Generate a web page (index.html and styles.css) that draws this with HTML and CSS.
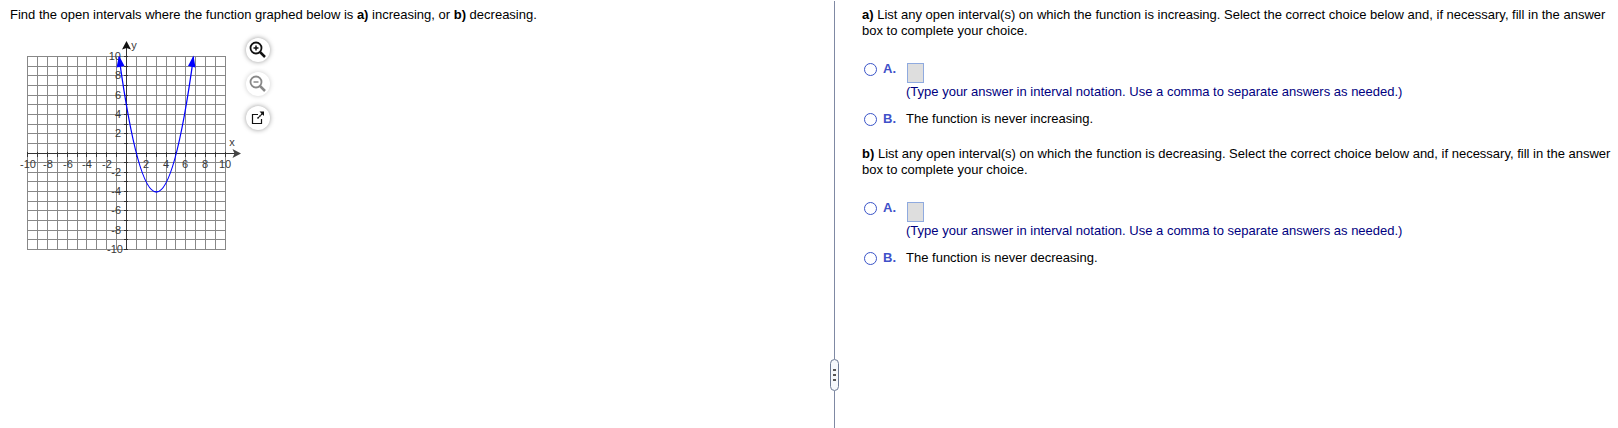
FILE: index.html
```
<!DOCTYPE html>
<html lang="en">
  <head>
    <meta charset="UTF-8" />
    <meta name="viewport" content="width=device-width, initial-scale=1.0" />
    <title>Increasing and decreasing intervals</title>
    <link rel="stylesheet" href="styles.css">
  </head>

  <body>
    <main class="exercise">
      <section class="question">
        <p class="prompt">Find the open intervals where the function graphed below is <b>a)</b> increasing, or <b>b)</b> decreasing.</p>
        <div class="figure">
          <svg class="graph" width="226" height="220" viewBox="18 38 226 220" role="img" aria-label="Graph of a parabola">
            <!-- grid -->
            <path class="grid" d="M27.5 56V250M37.5 56V250M47.5 56V250M57.5 56V250M67.5 56V250M77.5 56V250M86.5 56V250M96.5 56V250M106.5 56V250M116.5 56V250M136.5 56V250M146.5 56V250M156.5 56V250M166.5 56V250M175.5 56V250M185.5 56V250M195.5 56V250M205.5 56V250M215.5 56V250M225.5 56V250" />
            <path class="grid" d="M27 56.5H226M27 66.5H226M27 75.5H226M27 85.5H226M27 95.5H226M27 104.5H226M27 114.5H226M27 124.5H226M27 133.5H226M27 143.5H226M27 162.5H226M27 172.5H226M27 181.5H226M27 191.5H226M27 201.5H226M27 210.5H226M27 220.5H226M27 230.5H226M27 239.5H226M27 249.5H226" />
            <!-- axes and ticks -->
            <path class="axis" d="M126.5 46V250M27 153.5H235" />
            <path class="axis" d="M27.5 152V157M37.5 152V157M47.5 152V157M57.5 152V157M67.5 152V157M77.5 152V157M86.5 152V157M96.5 152V157M106.5 152V157M116.5 152V157M136.5 152V157M146.5 152V157M156.5 152V157M166.5 152V157M175.5 152V157M185.5 152V157M195.5 152V157M205.5 152V157M215.5 152V157M225.5 152V157" />
            <path class="axis" d="M124 56.5H128M124 66.5H128M124 75.5H128M124 85.5H128M124 95.5H128M124 104.5H128M124 114.5H128M124 124.5H128M124 133.5H128M124 143.5H128M124 162.5H128M124 172.5H128M124 181.5H128M124 191.5H128M124 201.5H128M124 210.5H128M124 220.5H128M124 230.5H128M124 239.5H128M124 249.5H128" />
            <path class="head-y" d="M126.500 41L131 49.500L126.500 48L122 49.500Z" />
            <path class="head-x" d="M241 153.500L232.500 158L234.500 153.500L232.500 149Z" />
            <g class="ticks end">
              <text x="121" y="60">10</text>
              <text x="121" y="79">8</text>
              <text x="121" y="99">6</text>
              <text x="121" y="118">4</text>
              <text x="121" y="137">2</text>
              <text x="121" y="176">-2</text>
              <text x="121" y="195">-4</text>
              <text x="121" y="214">-6</text>
              <text x="121" y="234">-8</text>
              <text x="123" y="253">-10</text>
            </g>
            <g class="ticks">
              <text x="28" y="168">-10</text>
              <text x="48" y="168">-8</text>
              <text x="68" y="168">-6</text>
              <text x="87" y="168">-4</text>
              <text x="107" y="168">-2</text>
              <text x="146" y="168">2</text>
              <text x="166" y="168">4</text>
              <text x="185" y="168">6</text>
              <text x="205" y="168">8</text>
              <text x="225" y="168">10</text>
              <text x="134" y="49">y</text>
              <text x="232" y="146">x</text>
            </g>
            <!-- y = (x - 1)(x - 5) -->
            <path class="curve" d="M119 57Q156.500 327 193.500 57" />
            <path class="curve-head" d="M119 55.500L124.500 66L116.500 67.500ZM193.500 55.500L195.500 67.500L188 66Z" />
          </svg>
          <div class="tools">
            <button class="tool" type="button" aria-label="Zoom in">
              <svg width="18" height="18" viewBox="0 0 18 18"><circle cx="7" cy="7" r="5.500" stroke-width="1.800" /><path d="M4.500 7H9.500M7 4.500V9.500" stroke-width="1.500" /><path d="M10.500 10.500L16 16" stroke-width="2.500" /></svg>
            </button>
            <button class="tool" type="button" aria-label="Zoom out" disabled>
              <svg width="18" height="18" viewBox="0 0 18 18"><circle cx="7" cy="7" r="5.500" stroke-width="1.800" /><path d="M4.500 7H9.500" stroke-width="1.500" /><path d="M10.500 10.500L16 16" stroke-width="2.500" /></svg>
            </button>
            <button class="tool" type="button" aria-label="Open in new window">
              <svg width="18" height="18" viewBox="0 0 18 18"><path d="M9 5.500H3.500V14.500H12.500V10" stroke-width="1.200" /><path d="M8.500 9.500L13.500 4.500" stroke-width="1.500" stroke-dasharray="2 0.500" /><path class="solid" d="M10.500 2.500H15V7Z" /></svg>
            </button>
          </div>
        </div>
      </section>

      <div class="divider">
        <button class="handle" type="button" aria-label="Resize panes"><i></i><i></i><i></i></button>
      </div>

      <section class="answers">
        <div class="part">
          <p class="prompt"><b>a)</b> List any open interval(s) on which the function is increasing. Select the correct choice below and, if necessary, fill in the answer box to complete your choice.</p>
          <div class="choice fill-in">
            <input type="radio" name="inc" id="inc-a" />
            <label class="letter" for="inc-a">A.</label>
            <div>
              <input class="blank" type="text" aria-label="Interval where increasing" />
              <p class="hint">(Type your answer in interval notation. Use a comma to separate answers as needed.)</p>
            </div>
          </div>
          <div class="choice">
            <input type="radio" name="inc" id="inc-b" />
            <label class="letter" for="inc-b">B.</label>
            <label for="inc-b">The function is never increasing.</label>
          </div>
        </div>
        <div class="part">
          <p class="prompt"><b>b)</b> List any open interval(s) on which the function is decreasing. Select the correct choice below and, if necessary, fill in the answer box to complete your choice.</p>
          <div class="choice fill-in">
            <input type="radio" name="dec" id="dec-a" />
            <label class="letter" for="dec-a">A.</label>
            <div>
              <input class="blank" type="text" aria-label="Interval where decreasing" />
              <p class="hint">(Type your answer in interval notation. Use a comma to separate answers as needed.)</p>
            </div>
          </div>
          <div class="choice">
            <input type="radio" name="dec" id="dec-b" />
            <label class="letter" for="dec-b">B.</label>
            <label for="dec-b">The function is never decreasing.</label>
          </div>
        </div>
      </section>
    </main>
  </body>
</html>
```
FILE: styles.css
```
* {
  box-sizing: border-box;
}

body {
  margin: 0;
  background: #fff;
  color: #000;
  font-family: "Liberation Sans", Arial, sans-serif;
  font-size: 13px;
  line-height: 16px;
}

p {
  margin: 0;
}

.exercise {
  display: grid;
  grid-template-columns: 51.3% 9px 1fr;
  min-height: 100vh;
}

.question {
  padding: 7px 10px;
}

.figure {
  display: flex;
  gap: 2px;
  padding: 15px 8px;
}

.grid {
  fill: none;
  stroke: #888;
  shape-rendering: crispEdges;
}

.axis {
  fill: none;
  stroke: #333;
  shape-rendering: crispEdges;
}

.head-y {
  fill: #111;
}

.head-x {
  fill: #444;
}

.ticks {
  fill: #3a3a3a;
  font-size: 11px;
  text-anchor: middle;
}

.ticks.end {
  text-anchor: end;
}

.curve {
  fill: none;
  stroke: #00f;
  stroke-width: 1.3;
}

.curve-head {
  fill: #00f;
}

.tools {
  display: flex;
  flex-direction: column;
  gap: 10px;
}

.tool {
  display: flex;
  align-items: center;
  justify-content: center;
  width: 24px;
  height: 24px;
  padding: 0;
  border: none;
  border-radius: 50%;
  background: #fff;
  box-shadow: 0 0 5px rgba(0, 0, 0, 0.4);
  cursor: pointer;
}

.tool svg {
  fill: none;
  stroke: #111;
}

.tool .solid {
  fill: #111;
  stroke: none;
}

.tool:disabled {
  box-shadow: 0 0 5px rgba(0, 0, 0, 0.2);
  cursor: default;
}

.tool:disabled svg {
  stroke: #888;
}

.divider {
  display: flex;
  flex-direction: column;
  align-items: center;
  margin-top: 1px;
}

.divider:before,
.divider:after {
  content: "";
  width: 1px;
  background: #7f89a3;
}

.divider:before {
  flex: 1;
}

.divider:after {
  height: 37px;
}

.handle {
  display: flex;
  flex-direction: column;
  align-items: center;
  justify-content: center;
  gap: 3px;
  width: 9px;
  height: 32px;
  padding: 0;
  border: 1px solid #6c7a94;
  border-radius: 5px;
  background: #f5f8fb;
  cursor: col-resize;
}

.handle i {
  width: 3px;
  height: 2px;
  background: #555;
}

.answers {
  padding: 7px 6px 7px 23px;
}

.part {
  margin-bottom: 19px;
}

.choice {
  display: grid;
  grid-template-columns: 15px 17px 1fr;
  column-gap: 6px;
  align-items: start;
  margin-top: 11px;
}

.choice.fill-in {
  margin-top: 22px;
}

.choice input[type="radio"] {
  appearance: none;
  width: 13px;
  height: 13px;
  margin: 2px 0 0 2px;
  border: 1px solid #3a54c8;
  border-radius: 50%;
  background: #fff;
}

.choice input[type="radio"]:checked {
  background: #3a54c8;
}

.letter {
  color: #3f51c9;
  font-weight: bold;
}

.blank {
  display: block;
  width: 17px;
  height: 20px;
  margin: 2px 0 1px 1px;
  padding: 0;
  border: 1px solid #8faadf;
  background: #dedede;
}

.hint {
  color: #000080;
}
```
